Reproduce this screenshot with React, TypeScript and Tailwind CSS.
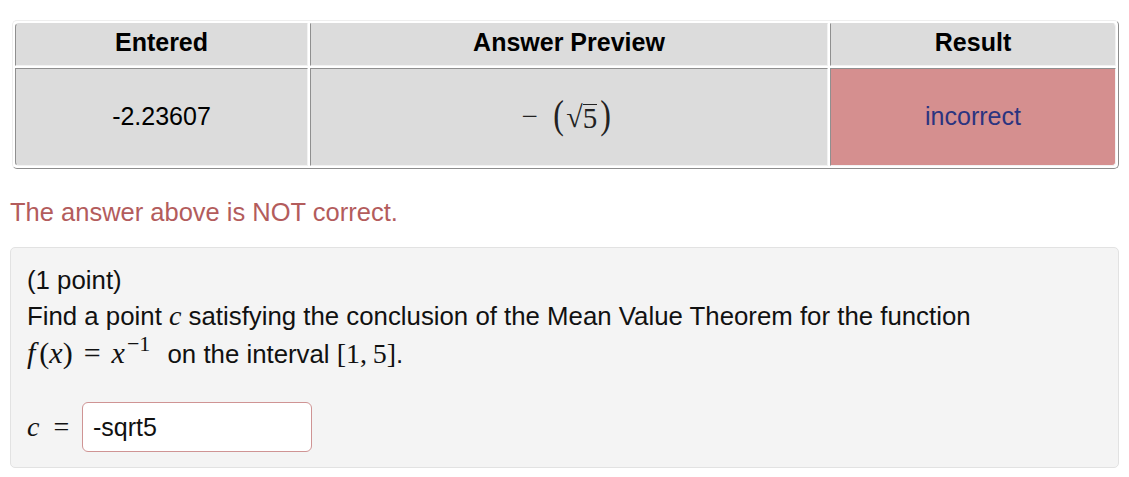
import { useState } from 'react'

const sans = { fontFamily: '"Liberation Sans", Arial, sans-serif' }
const serif = { fontFamily: '"Liberation Serif", "Times New Roman", serif' }

function AttemptTable() {
  return (
    <table
      className="ml-[12px] mt-[20px] w-[1107px] border-separate border-spacing-[2px] border border-t-[#eeeeee] border-l-[#eeeeee] border-r-[#8c8c8c] border-b-[#8c8c8c] rounded-[5px] text-[25px] text-black"
      style={sans}
    >
      <thead>
        <tr>
          <th className="w-[293px] h-[42px] bg-[#dcdcdc] font-bold border border-t-[#dcdcdc] border-l-[#8f8f8f] border-r-[#f2f2f2] border-b-[#f2f2f2] rounded-tl-[4px] pb-[3px]">Entered</th>
          <th className="w-[518px] h-[42px] bg-[#dcdcdc] font-bold border border-t-[#dcdcdc] border-l-[#8f8f8f] border-r-[#f2f2f2] border-b-[#f2f2f2] pb-[3px]">Answer Preview</th>
          <th className="w-[286px] h-[42px] bg-[#dcdcdc] font-bold border border-t-[#dcdcdc] border-l-[#8f8f8f] border-r-[#f2f2f2] border-b-[#f2f2f2] rounded-tr-[4px] pb-[3px]">Result</th>
        </tr>
      </thead>
      <tbody>
        <tr>
          <td className="h-[98px] bg-[#dcdcdc] text-center border border-t-[#8f8f8f] border-l-[#8f8f8f] border-r-[#f2f2f2] border-b-[#f2f2f2] rounded-bl-[4px]">-2.23607</td>
          <td className="h-[98px] bg-[#dcdcdc] text-center border border-t-[#8f8f8f] border-l-[#8f8f8f] border-r-[#f2f2f2] border-b-[#f2f2f2]">
            <span className="inline-flex items-center text-[29px] text-[#222] ml-[-4px]" style={serif}>
              <span className="mr-[14px]">−</span>
              <span className="text-[40px] font-light leading-none mb-[4px] scale-x-[0.8]">(</span>
              <span className="text-[30px] leading-none ml-[1px]">√</span>
              <span className="border-t border-[#222] leading-[27px] mt-[3px]">5</span>
              <span className="text-[40px] font-light leading-none mb-[4px] ml-[2px] scale-x-[0.8]">)</span>
            </span>
          </td>
          <td className="h-[98px] bg-[#d58f8f] text-center text-[#2b3480] border border-t-[#8f8f8f] border-l-[#8f8f8f] border-r-[#f2f2f2] border-b-[#f2f2f2] rounded-br-[4px]">incorrect</td>
        </tr>
      </tbody>
    </table>
  )
}

export default function App() {
  const [answer, setAnswer] = useState('-sqrt5')

  return (
    <div className="w-[1129px] h-[477px] bg-white overflow-hidden" style={sans}>
      <AttemptTable />

      <p className="ml-[10px] mt-[28px] text-[25.5px] leading-[30px] text-[#b35c5c]">
        The answer above is NOT correct.
      </p>

      <div className="ml-[10px] mt-[20px] w-[1109px] h-[221px] bg-[#f4f4f4] border border-[#e2e2e2] rounded-[5px] pl-[16px] pt-[15px] text-[25.8px] leading-[35.5px] text-[#111]">
        <div>(1 point)</div>
        <div>
          Find a point <i className="text-[28px]" style={serif}>c</i> satisfying the conclusion of the Mean Value Theorem for the function
        </div>
        <div>
          <span className="text-[30px]" style={serif}>
            <i className="mr-[4px]">f</i>(<i>x</i>)<span className="mx-[11px]">=</span><i>x</i>
            <sup className="text-[22px] relative top-[-12px] ml-[2px] mr-[10px]">−1</sup>
          </span>{' '}
          on the interval{' '}
          <span className="text-[28px]" style={serif}>[1,&thinsp;5]</span>.
        </div>

        <div className="mt-[30px] flex items-center">
          <span className="text-[28px] whitespace-nowrap w-[55px]" style={serif}>
            <i>c</i>
            <span className="ml-[14px]">=</span>
          </span>
          <input
            value={answer}
            onChange={(e) => setAnswer(e.target.value)}
            className="w-[230px] h-[50px] bg-white border border-[#cf9494] rounded-[6px] px-[10px] text-[25px] text-[#111] outline-none"
            style={sans}
          />
        </div>
      </div>
    </div>
  )
}
